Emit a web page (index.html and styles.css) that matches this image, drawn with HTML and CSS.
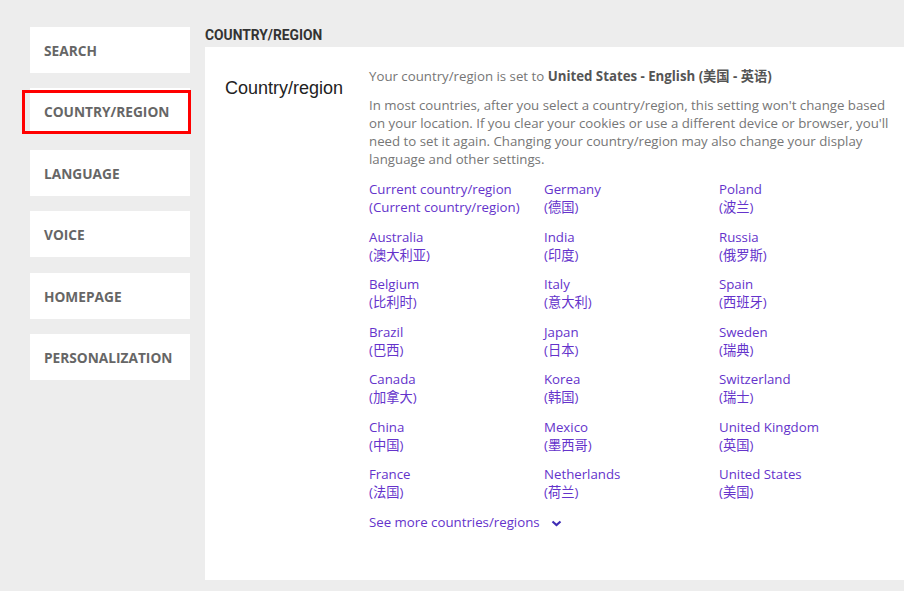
FILE: index.html
```html
<html>
    <head>
        <meta charset="utf-8">
        <link rel="stylesheet" href="styles.css">
    </head>
    <body>
        <div class="page">
            <div class="tabs">
                <div class="tab">SEARCH</div>
                <div class="tab selected">COUNTRY/REGION</div>
                <div class="tab">LANGUAGE</div>
                <div class="tab">VOICE</div>
                <div class="tab">HOMEPAGE</div>
                <div class="tab">PERSONALIZATION</div>
            </div>
            <div class="main">
                <div class="heading">COUNTRY/REGION</div>
                <div class="panel">
                    <div class="label">Country/region</div>
                    <div class="content">
                        <div class="current">Your country/region is set to <b>United States - English (美国 - 英语)</b></div>
                        <p class="note">In most countries, after you select a country/region, this setting won't change based on your location. If you clear your cookies or use a different device or browser, you'll need to set it again. Changing your country/region may also change your display language and other settings.</p>
                        <div class="regions">
                            <a class="region">Current country/region<br>(Current country/region)</a>
                            <a class="region">Germany<br>(德国)</a>
                            <a class="region">Poland<br>(波兰)</a>
                            <a class="region">Australia<br>(澳大利亚)</a>
                            <a class="region">India<br>(印度)</a>
                            <a class="region">Russia<br>(俄罗斯)</a>
                            <a class="region">Belgium<br>(比利时)</a>
                            <a class="region">Italy<br>(意大利)</a>
                            <a class="region">Spain<br>(西班牙)</a>
                            <a class="region">Brazil<br>(巴西)</a>
                            <a class="region">Japan<br>(日本)</a>
                            <a class="region">Sweden<br>(瑞典)</a>
                            <a class="region">Canada<br>(加拿大)</a>
                            <a class="region">Korea<br>(韩国)</a>
                            <a class="region">Switzerland<br>(瑞士)</a>
                            <a class="region">China<br>(中国)</a>
                            <a class="region">Mexico<br>(墨西哥)</a>
                            <a class="region">United Kingdom<br>(英国)</a>
                            <a class="region">France<br>(法国)</a>
                            <a class="region">Netherlands<br>(荷兰)</a>
                            <a class="region">United States<br>(美国)</a>
                        </div>
                        <a class="more">See more countries/regions
                            <svg class="chevron" width="11" height="7" viewBox="0 0 11 7"><path d="M1.5 1.5 L5.5 5 L9.5 1.5" fill="none" stroke="#3f2db5" stroke-width="2.2"/></svg>
                        </a>
                    </div>
                </div>
            </div>
        </div>
    </body>
</html>
```
FILE: styles.css
```css
body{
    margin: 0;
    background-color: #ededed;
    font-family: "Open Sans", "Noto Sans CJK SC", sans-serif;
}
.page{
    display: flex;
}
.tabs{
    display: flex;
    flex-direction: column;
    gap: 15.4px;
    width: 160px;
    padding: 27px 0 0 30px;
}
.tab{
    position: relative;
    height: 45px;
    padding: 1px 0 0 14px;
    line-height: 46px;
    background-color: white;
    color: #666666;
    font-size: 13.7px;
    font-weight: bold;
}
.tab.selected::after{
    content: "";
    position: absolute;
    left: -8px;
    right: -1px;
    top: 2px;
    bottom: 0;
    border: 3px solid #ff0000;
}
.main{
    flex: 1;
    margin-left: 15px;
    padding-top: 26px;
}
.heading{
    height: 21px;
    line-height: 18px;
    color: #333333;
    font-family: Roboto, sans-serif;
    font-size: 13.8px;
    font-weight: bold;
}
.panel{
    display: flex;
    height: 513px;
    padding: 20px 0 0 20px;
    background-color: white;
}
.label{
    width: 144px;
    margin-top: 9px;
    line-height: 24px;
    color: #222222;
    font-family: "Liberation Sans", sans-serif;
    font-size: 18px;
}
.content{
    width: 525px;
    font-size: 13.25px;
    line-height: 18px;
}
.current{
    color: #767676;
}
.current b{
    color: #555555;
}
.note{
    margin: 11px 0 12px 0;
    color: #767676;
}
.regions{
    display: grid;
    grid-template-columns: 175px 175px 175px;
    row-gap: 11.5px;
}
.region, .more{
    color: #6433cb;
}
.more{
    display: block;
    margin-top: 12px;
}
.chevron{
    margin-left: 8px;
}
```
